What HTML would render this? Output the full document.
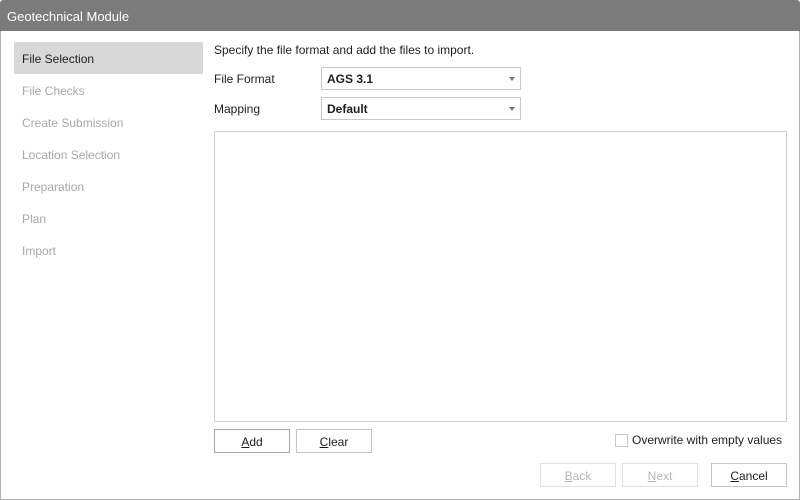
<!DOCTYPE html>
<html><head><style>
*{margin:0;padding:0;box-sizing:border-box}
body{width:800px;height:500px;background:#fff;font-family:"Segoe UI","Liberation Sans",sans-serif;font-size:12px;color:#1e1e1e;position:relative;overflow:hidden}
.t{position:absolute;left:0;top:0;width:800px;height:31px;background:#7b7b7b;color:#fff;font-size:13px;padding:9px 0 0 7px;border-radius:3px 3px 0 0}
.win{position:absolute;left:0;top:31px;width:800px;height:469px;border:1px solid #b0b0b0;border-top:none}
.a{position:absolute;white-space:nowrap}
.s{left:22px;color:#a8a8a8}
.hl{position:absolute;left:14px;top:42px;width:189px;height:32px;background:#d9d8d9}
.cb{position:absolute;left:321px;width:200px;height:23px;border:1px solid #c8c8c8;background:#fff;font-weight:bold;padding:4px 0 0 5px}
.cb:after{content:"";position:absolute;right:5px;top:9px;border-left:3px solid transparent;border-right:3px solid transparent;border-top:4px solid #777}
.btn{position:absolute;height:24px;border:1px solid #c4c4c4;background:#fff;text-align:center;padding-top:5px}
.dis{border-color:#e0e0e0;color:#b5b5b5}
</style></head><body>
<div class="t">Geotechnical Module</div>
<div class="win"></div>
<div class="hl"></div>
<div class="a" style="left:22px;top:52px">File Selection</div>
<div class="a s" style="top:84px">File Checks</div>
<div class="a s" style="top:116px">Create Submission</div>
<div class="a s" style="top:148px">Location Selection</div>
<div class="a s" style="top:180px">Preparation</div>
<div class="a s" style="top:212px">Plan</div>
<div class="a s" style="top:244px">Import</div>
<div class="a" style="left:214px;top:43px">Specify the file format and add the files to import.</div>
<div class="a" style="left:214px;top:72px">File Format</div>
<div class="a" style="left:214px;top:102px">Mapping</div>
<div class="cb" style="top:67px">AGS 3.1</div>
<div class="cb" style="top:97px">Default</div>
<div style="position:absolute;left:214px;top:131px;width:573px;height:291px;border:1px solid #cfcfcf"></div>
<div class="btn" style="left:214px;top:429px;width:76px;border-color:#a8a8a8"><u>A</u>dd</div>
<div class="btn" style="left:296px;top:429px;width:76px"><u>C</u>lear</div>
<div style="position:absolute;left:615px;top:434px;width:13px;height:13px;border:1px solid #c8c8c8"></div>
<div class="a" style="left:632px;top:433px">Overwrite with empty values</div>
<div class="btn dis" style="left:540px;top:463px;width:76px"><u>B</u>ack</div>
<div class="btn dis" style="left:622px;top:463px;width:76px"><u>N</u>ext</div>
<div class="btn" style="left:711px;top:463px;width:76px"><u>C</u>ancel</div>
</body></html>
